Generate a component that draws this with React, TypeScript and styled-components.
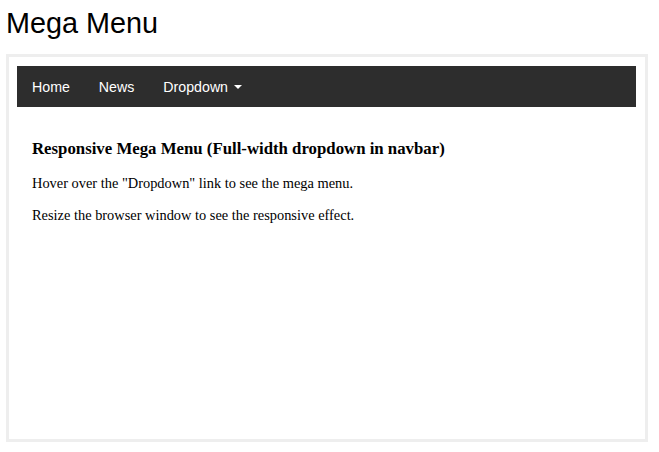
import { createGlobalStyle } from "styled-components";
import styled from "styled-components";

const GlobalStyle = createGlobalStyle`
  html, body {
    margin: 0;
    padding: 0;
    background: #fff;
  }
  body {
    font-family: "Liberation Serif", "Times New Roman", serif;
    color: #000;
  }
`;

const Page = styled.div`
  padding: 0 11px 0 6px;
`;

const Title = styled.h1`
  margin: 0;
  padding-top: 6px;
  height: 48px;
  font-family: "Liberation Sans", Arial, sans-serif;
  font-size: 28.8px;
  font-weight: 400;
  line-height: 34px;
`;

const Frame = styled.div`
  box-sizing: border-box;
  height: 388px;
  border: 3px solid #eeeeee;
  padding: 9px 9px 8px 8px;
`;

const Navbar = styled.nav`
  display: flex;
  height: 41px;
  background: #2d2d2d;
  font-family: "Liberation Sans", Arial, sans-serif;
`;

const NavLink = styled.a`
  display: flex;
  align-items: center;
  gap: 6px;
  padding: 0 14px 0 15px;
  color: #fff;
  font-size: 14.2px;
  text-decoration: none;
  cursor: pointer;
`;

const Caret = styled.span`
  width: 0;
  height: 0;
  border-left: 4px solid transparent;
  border-right: 4px solid transparent;
  border-top: 4px solid #fff;
  margin-top: 1px;
`;

const Content = styled.div`
  padding: 32px 15px 0;
`;

const Heading = styled.h3`
  margin: 0 0 16px;
  font-size: 16.8px;
  font-weight: 700;
  line-height: 20px;
`;

const Paragraph = styled.p`
  margin: 0 0 15px;
  font-size: 14.4px;
  line-height: 17px;
`;

export default function App() {
  return (
    <>
      <GlobalStyle />
      <Page>
        <Title>Mega Menu</Title>
        <Frame>
          <Navbar>
            <NavLink>Home</NavLink>
            <NavLink>News</NavLink>
            <NavLink>
              Dropdown <Caret />
            </NavLink>
          </Navbar>
          <Content>
            <Heading>Responsive Mega Menu (Full-width dropdown in navbar)</Heading>
            <Paragraph>Hover over the "Dropdown" link to see the mega menu.</Paragraph>
            <Paragraph>Resize the browser window to see the responsive effect.</Paragraph>
          </Content>
        </Frame>
      </Page>
    </>
  );
}
